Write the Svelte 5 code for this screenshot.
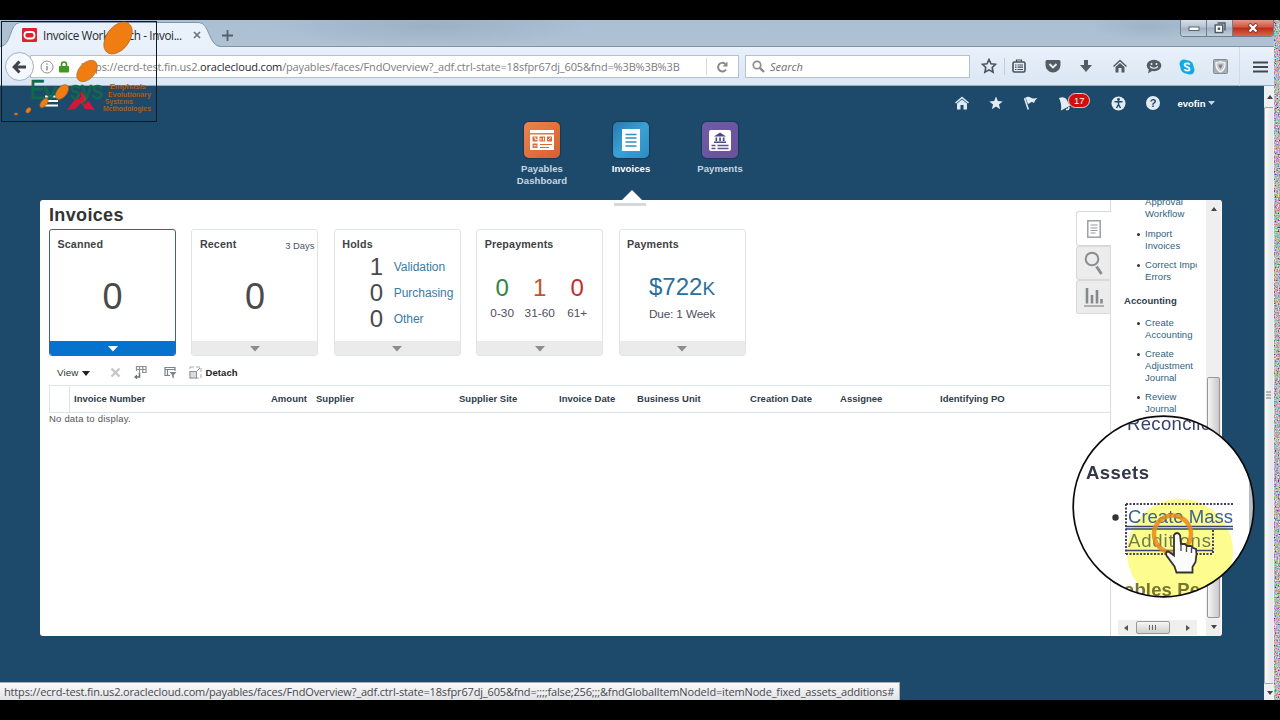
<script lang="ts">
  type Tile = { label: string; icon: string; active?: boolean };

  const tiles: Tile[] = [
    { label: "Payables Dashboard", icon: "dashboard" },
    { label: "Invoices", icon: "invoices", active: true },
    { label: "Payments", icon: "bank" },
  ];

  const holds = [
    { count: 1, label: "Validation" },
    { count: 0, label: "Purchasing" },
    { count: 0, label: "Other" },
  ];

  const aging = [
    { count: 0, label: "0-30", tone: "green" },
    { count: 1, label: "31-60", tone: "orange" },
    { count: 0, label: "61+", tone: "red" },
  ];

  const columns = [
    "Invoice Number", "Amount", "Supplier", "Supplier Site", "Invoice Date",
    "Business Unit", "Creation Date", "Assignee", "Identifying PO",
  ];

  const invoiceTasks = [["Approval", "Workflow"], ["Import", "Invoices"], ["Correct Import", "Errors"]];
  const accountingTasks = [["Create", "Accounting"], ["Create", "Adjustment", "Journal"], ["Review", "Journal"]];

  let selected = $state("Scanned");
</script>

{#snippet card(name: string, body: any, note = "")}
  <button class="card" class:selected={selected === name} onclick={() => (selected = name)}>
    <span class="card-head"><b>{name}</b><small>{note}</small></span>
    <span class="card-body">{@render body()}</span>
    <span class="card-foot"><svg width="10" height="6" viewBox="0 0 10 6"><path d="M0 0h10L5 5.5z" fill="currentColor" /></svg></span>
  </button>
{/snippet}

{#snippet zero()}<span class="big">0</span>{/snippet}

{#snippet holdRows()}
  <span class="holds">
    {#each holds as h}
      <span class="hold"><i>{h.count}</i><em>{h.label}</em></span>
    {/each}
  </span>
{/snippet}

{#snippet agingCols()}
  <span class="aging">
    {#each aging as a}
      <span class="age"><i class={a.tone}>{a.count}</i><em>{a.label}</em></span>
    {/each}
  </span>
{/snippet}

{#snippet due()}
  <span class="due"><i>$722<small>K</small></i><em>Due: 1 Week</em></span>
{/snippet}

{#snippet taskList(items: string[][])}
  <ul>
    {#each items as lines}
      <li>{#each lines as line}<span>{line}</span>{/each}</li>
    {/each}
  </ul>
{/snippet}

<div class="screen">
  <div class="titlebar">
    <div class="tab">
      <svg class="tab-shape" width="222" height="27" viewBox="0 0 222 27">
        <path d="M0 27C12 26 9 3 20 2.500H199C210 3 208 26 221 27z" fill="#e9f1fa" />
        <path d="M0 26.500C12 26 9 3 20 2.500H199C210 3 208 26 221 26.500" fill="none" stroke="#8296aa" />
      </svg>
      <svg class="favicon" width="15" height="14" viewBox="0 0 15 14"><rect width="15" height="14" rx="1" fill="#dc2230" /><rect x="2.500" y="4" width="10" height="6.500" rx="3" fill="none" stroke="#fff" stroke-width="1.800" /></svg>
      <span class="tab-title">Invoice Workbench - Invoi...</span>
      <svg class="tab-close" width="8" height="8" viewBox="0 0 8 8"><path d="M1 1l6 6M7 1l-6 6" stroke="#6b7480" stroke-width="1.700" /></svg>
    </div>
    <svg class="plus" width="11" height="11" viewBox="0 0 11 11"><path d="M5.500 0v11M0 5.500h11" stroke="#55606c" stroke-width="1.800" /></svg>
    <div class="win">
      <span class="min"><svg width="12" height="8" viewBox="0 0 12 8"><rect x="1" y="3" width="10" height="3.500" fill="#fff" stroke="#5a6470" /></svg></span>
      <span class="max"><svg width="12" height="12" viewBox="0 0 12 12"><path d="M3.500 1h7.500v7.500" fill="none" stroke="#4c5866" stroke-width="1.400" /><rect x="1.200" y="3" width="7.500" height="7.500" fill="#fff" stroke="#4c5866" stroke-width="1.400" /><rect x="3.700" y="5.500" width="2.500" height="2.500" fill="#4c5866" /></svg></span>
      <span class="close"><svg width="12" height="10" viewBox="0 0 12 10"><path d="M2 1l8 8M10 1l-8 8" stroke="#8d2b22" stroke-width="4" /><path d="M2.500 1.500l7 7M9.500 1.500l-7 7" stroke="#fff" stroke-width="2.400" /></svg></span>
    </div>
  </div>

  <div class="toolbar">
    <div class="back"><svg width="15" height="14" viewBox="0 0 15 14"><path d="M7.500 1.500L2.200 7l5.300 5.500M2.500 7H14" fill="none" stroke="#3f4347" stroke-width="3" /></svg></div>
    <div class="url">
      <svg width="14" height="14" viewBox="0 0 14 14"><circle cx="7" cy="7" r="6" fill="none" stroke="#909090" /><path d="M7 6v4.500M7 3.500v1.300" stroke="#777" stroke-width="1.200" /></svg>
      <svg class="lock" width="10" height="12" viewBox="0 0 10 12"><path d="M2.500 6V3.500a2.500 2.500 0 015 0V6" fill="none" stroke="#3d8f22" stroke-width="1.600" /><rect y="5" width="10" height="6.500" rx="1" fill="#3d9a1e" /></svg>
      <span class="url-text">https://ecrd-test.fin.us2.<b>oraclecloud.com</b>/payables/faces/FndOverview?_adf.ctrl-state=18sfpr67dj_605&amp;fnd=%3B%3B%3B</span>
      <span class="reload"><svg width="13" height="12" viewBox="0 0 13 12"><path d="M10 8.500A4.300 4.300 0 119.300 3" fill="none" stroke="#8a8a8a" stroke-width="2" /><path d="M11.500 .5v5h-5z" fill="#8a8a8a" /></svg></span>
    </div>
    <div class="search">
      <svg width="13" height="13" viewBox="0 0 13 13"><circle cx="5" cy="5" r="3.700" fill="none" stroke="#8c8c8c" stroke-width="1.700" /><path d="M7.800 7.800l4.200 4.200" stroke="#8c8c8c" stroke-width="2.400" /></svg>
      <span>Search</span>
    </div>
    <div class="tb-star"><svg width="16" height="16" viewBox="0 0 16 16"><path d="M8 1.500l2 4.300 4.600.5-3.400 3.200.9 4.700L8 11.900l-4.100 2.300.9-4.700L1.400 6.300 6 5.800z" fill="none" stroke="#4b5058" stroke-width="1.600" /></svg></div>
    <div class="tb-icons">
      <span><svg width="14" height="14" viewBox="0 0 14 14"><rect x="1" y="3" width="12" height="10" rx="1.500" fill="none" stroke="#4b5058" stroke-width="1.600" /><path d="M4.500 3V1h5v2M3 6h1.500M3 8.200h1.500M3 10.500h1.500M5.500 6H11M5.500 8.200H11M5.500 10.500H11" fill="none" stroke="#4b5058" stroke-width="1.200" /></svg></span>
      <span><svg width="16" height="14" viewBox="0 0 16 14"><path d="M2 1h12a1.500 1.500 0 011.500 1.500V6a7.500 7.500 0 01-15 0V2.500A1.500 1.500 0 012 1z" fill="#565b63" /><path d="M4.500 5L8 8.500 11.500 5" fill="none" stroke="#e6eef7" stroke-width="1.900" /></svg></span>
      <span><svg width="14" height="14" viewBox="0 0 14 14"><path d="M5 1h4v5h4L7 13 1 6h4z" fill="#565b63" /></svg></span>
      <span><svg width="14" height="14" viewBox="0 0 14 14"><path d="M7 .5L14 7l-1 1-6-5.500L1 8 0 7z" fill="#565b63" /><path d="M2.500 8L7 4l4.500 4v5.500h-3V9h-3v4.500h-3z" fill="#565b63" /></svg></span>
      <span><svg width="16" height="15" viewBox="0 0 16 15"><ellipse cx="8" cy="6.500" rx="7.300" ry="5.800" fill="#565b63" /><path d="M3 10L2 14.500 7.500 11z" fill="#565b63" /><circle cx="5.500" cy="5" r="1" fill="#e6eef7" /><circle cx="10.500" cy="5" r="1" fill="#e6eef7" /><path d="M4 7.500q4 3.500 8 0" fill="none" stroke="#e6eef7" stroke-width="1.200" /></svg></span>
      <span><svg width="16" height="16" viewBox="0 0 16 16"><circle cx="5" cy="5" r="4.500" fill="#10abe5" /><circle cx="11" cy="11" r="4.500" fill="#10abe5" /><circle cx="8" cy="8" r="6.700" fill="#10abe5" /><path d="M10.700 5.500C9.500 4 5.500 4 5.500 6S10.700 7.800 10.700 10 6.500 12 5.200 10.300" fill="none" stroke="#fff" stroke-width="1.700" /></svg></span>
      <span><svg width="15" height="15" viewBox="0 0 15 15"><rect x=".5" y=".5" width="14" height="14" rx="1" fill="#a9aeb4" stroke="#858b92" /><path d="M3 3.500Q6 3.500 7.500 2.500 9 3.500 12 3.500q.5 7-4.500 9.500Q2.500 10.500 3 3.500z" fill="#c9cdd1" stroke="#f6f8fa" stroke-width="1.200" /><path d="M5.500 5.500h4q0 3-2 4.500-2-1.500-2-4.500" fill="#7f858c" /></svg></span>
    </div>
    <div class="burger"><svg width="15" height="12" viewBox="0 0 15 12"><path d="M0 1.500h15M0 6h15M0 10.500h15" stroke="#44484e" stroke-width="2.200" /></svg></div>
  </div>

  <div class="viewport">
    <div class="page">
      <div class="global">
        <svg class="menu" width="13" height="12" viewBox="0 0 13 12"><path d="M0 1.500h13M0 6h13M0 10.500h13" stroke="#fff" stroke-width="2" /></svg>
        <div class="global-icons">
          <span><svg width="14" height="14" viewBox="0 0 14 14"><path d="M7 .5L14 6.500l-1 1-6-5-6 5-1-1z" fill="#dfe9f1" /><path d="M2 7.500L7 3.500l5 4v6H8.500V9h-3v4.500H2z" fill="#dfe9f1" /></svg></span>
          <span><svg width="14" height="14" viewBox="0 0 14 14"><path d="M7 .5l1.800 4.600 4.900.3-3.800 3.100 1.300 4.800L7 10.600l-4.200 2.700 1.300-4.800L.3 5.400l4.900-.3z" fill="#e4ecf3" /></svg></span>
          <span><svg width="14" height="14" viewBox="0 0 14 14"><path d="M.5 2l3.800 11.500" stroke="#e4ecf3" stroke-width="1.600" /><path d="M1.500 1.500q3-1.500 5 0t7 .5q-3 2-3.500 5-2-1.500-3.500-.5T4 8z" fill="#e4ecf3" /></svg></span>
          <span class="bell">
            <svg width="14" height="15" viewBox="0 0 14 15"><path d="M1 2Q7 0 9 4q1 4 3.500 5.500L3 14.500Q4 8 1 2z" fill="#e4ecf3" /><path d="M8 13.500q3 .5 3-2.500" stroke="#e4ecf3" stroke-width="1.600" fill="none" /></svg>
            <b class="badge">17</b>
          </span>
          <span><svg width="15" height="15" viewBox="0 0 15 15"><circle cx="7.500" cy="7.500" r="7" fill="#e4ecf3" /><circle cx="7.500" cy="3.500" r="1.400" fill="#1d4a6b" /><path d="M3.500 5.800h8M7.500 6v3.500M7.500 8.500L5.500 12M7.500 8.500l2 3.500" stroke="#1d4a6b" stroke-width="1.500" /></svg></span>
          <span class="help">?</span>
          <span class="user">evofin <svg width="7" height="4" viewBox="0 0 7 4"><path d="M0 0h7L3.500 4z" fill="#c6d6e2" /></svg></span>
        </div>
      </div>

      <div class="tiles">
        {#each tiles as t}
          <div class="tile" class:active={t.active}>
            <div class="tile-icon {t.icon}">
              {#if t.icon === "dashboard"}
                <svg width="26" height="22" viewBox="0 0 26 22"><path d="M1 1h24v3H1z" fill="#fff" /><path d="M1 5.500h24V21H1z" fill="#fff" /><path d="M3.500 7.500h5v5h-5zM10.500 7.500h5.500v5h-5.500zM18 7.500h5v5h-5zM3.500 14.500h5v4.500h-5z" fill="#de6938" /><path d="M6 8v2.300h2.300M12 11.500V9M14.500 11.500V8.500M19 11l3-2.500M4.500 16.800h3" stroke="#fff" fill="none" /><path d="M11 15.500h12M11 18.500h9" stroke="#de6938" stroke-width="1.200" /></svg>
              {:else if t.icon === "invoices"}
                <svg width="20" height="24" viewBox="0 0 20 24"><path d="M1 1h18v22H1z" fill="#fff" /><path d="M4.500 6.500h11M4.500 10h11M4.500 14h11M4.500 18h11" stroke="#2f8fbf" stroke-width="1.300" /></svg>
              {:else}
                <svg width="24" height="23" viewBox="0 0 24 23"><rect x="1" y="1" width="22" height="21" rx="2" fill="#fff" /><path d="M6 7.500L12 3.500l6 4zM7.500 8.500h1.700v3.500H7.500zM11.200 8.500h1.700v3.500h-1.700zM14.800 8.500h1.700v3.500h-1.700zM6 12.500h12V14H6z" fill="#4c4684" /><path d="M3.500 16.500h4M9.500 16.500h11M3.500 19.500h4M9.500 19.500h11" stroke="#5c5391" stroke-width="1.400" /></svg>
              {/if}
            </div>
            <span>{t.label}</span>
            {#if t.active}<i class="pointer"></i>{/if}
          </div>
        {/each}
      </div>

      <div class="panel">
        <div class="main">
          <h1>Invoices</h1>
          <div class="cards">
            {@render card("Scanned", zero)}
            {@render card("Recent", zero, "3 Days")}
            {@render card("Holds", holdRows)}
            {@render card("Prepayments", agingCols)}
            {@render card("Payments", due)}
          </div>
          <div class="actions">
            <span class="view">View <svg width="8" height="5" viewBox="0 0 8 5"><path d="M0 0h8L4 5z" fill="#222" /></svg></span>
            <svg class="del" width="11" height="11" viewBox="0 0 11 11"><path d="M1.500 1.500l8 8M9.500 1.500l-8 8" stroke="#c4c8cb" stroke-width="2.400" /></svg>
            <svg class="wrap" width="13" height="14" viewBox="0 0 13 14"><path d="M2.500 1.500H12v6H8M2.500 1v5M2.500 4.500H12M5.500 1.500v6M8.800 1.500v6" fill="none" stroke="#8c9196" stroke-width="1.200" /><path d="M5.500 7.500v4.500H2" fill="none" stroke="#6f7479" stroke-width="1.600" /><path d="M3 9.500v5L0 12z" fill="#6f7479" /></svg>
            <svg class="filter" width="13" height="13" viewBox="0 0 13 13"><path d="M6 9.500H1v-8h10V5M1 3.500h10M3.500 3.500v6" fill="none" stroke="#7e8388" stroke-width="1.200" /><path d="M5.500 6h7L9.800 9v3.500L8.200 11.300V9z" fill="#7e8388" /></svg>
            <svg class="detach-icon" width="13" height="13" viewBox="0 0 13 13"><rect x="1" y="1" width="11" height="11" fill="none" stroke="#a7abaf" stroke-dasharray="4 2" /><rect x="1" y="5.500" width="6.500" height="6.500" fill="#d9dcde" stroke="#8d9296" /><path d="M8 5l3-3" stroke="#8d9296" /></svg>
            <b>Detach</b>
          </div>
          <div class="thead">
            <span></span>
            {#each columns as c}<b class:num={c === "Amount"}>{c}</b>{/each}
          </div>
          <p class="empty">No data to display.</p>
        </div>

        <div class="rail">
          <span class="on"><svg width="14" height="18" viewBox="0 0 14 18"><rect x=".8" y=".8" width="12.400" height="16.400" fill="none" stroke="#96999c" stroke-width="1.400" /><path d="M3.500 5h7M3.500 8h7M3.500 10.500h7M3.500 13h5" stroke="#96999c" stroke-width="1.100" /></svg></span>
          <span><svg width="19" height="24" viewBox="0 0 19 24"><circle cx="8" cy="8" r="6.300" fill="none" stroke="#8b8e91" stroke-width="2" /><path d="M12.500 15.500l5 7.500" stroke="#8b8e91" stroke-width="3" /></svg></span>
          <span><svg width="20" height="20" viewBox="0 0 20 20"><path d="M0 19h20" stroke="#85898c" stroke-width="1.200" /><path d="M3 1v15.500M8 8v8.500M13 3v13.500M17.500 12v4.500" stroke="#85898c" stroke-width="2.600" /></svg></span>
        </div>

        <div class="side">
          <div class="tasks">
            {@render taskList(invoiceTasks)}
            <h2>Accounting</h2>
            {@render taskList(accountingTasks)}
          </div>
          <div class="hscroll">
            <svg width="4" height="6" viewBox="0 0 4 6"><path d="M4 0v6L0 3z" fill="#555" /></svg>
            <i></i>
            <svg width="4" height="6" viewBox="0 0 4 6"><path d="M0 0v6l4-3z" fill="#555" /></svg>
          </div>
        </div>

        <div class="vscroll">
          <svg width="6" height="4" viewBox="0 0 6 4"><path d="M0 4h6L3 0z" fill="#444" /></svg>
          <i></i>
          <svg width="6" height="4" viewBox="0 0 6 4"><path d="M0 0h6L3 4z" fill="#444" /></svg>
        </div>
      </div>
    </div>

    <div class="page-scroll">
      <svg width="6" height="4" viewBox="0 0 6 4"><path d="M0 4h6L3 0z" fill="#444" /></svg>
      <i><svg width="6" height="8" viewBox="0 0 6 8"><path d="M1 1h5M1 4h5M1 7h5" stroke="#777" /></svg></i>
      <svg width="6" height="4" viewBox="0 0 6 4"><path d="M0 0h6L3 4z" fill="#444" /></svg>
    </div>
  </div>

  <div class="status">https://ecrd-test.fin.us2.oraclecloud.com/payables/faces/FndOverview?_adf.ctrl-state=18sfpr67dj_605&amp;fnd=;;;;false;256;;;&amp;fndGlobalItemNodeId=itemNode_fixed_assets_additions#</div>

  <!-- capture noise along the right edge -->
  <svg class="noise" width="6" height="680">
    <filter id="grain" x="0" y="0" width="100%" height="100%">
      <feTurbulence type="fractalNoise" baseFrequency="0.7" numOctaves="2" seed="7" />
      <feColorMatrix values="1.700 0 0 0 -.38  0 1.700 0 0 -.38  0 0 1.700 0 -.36  0 0 0 0 1" />
    </filter>
    <rect width="6" height="680" filter="url(#grain)" />
  </svg>

  <svg class="logo" width="160" height="104" viewBox="0 0 160 104">
    <rect x="1.500" y="1.500" width="155" height="100" fill="none" stroke="#0c1a26" />
    <path d="M67 90L81 71l14 19-10-1-4-6-6 6z" fill="#d3173a" />
    <text x="30" y="79" class="evo" font-size="28" textLength="15" lengthAdjust="spacingAndGlyphs">E</text>
    <text x="44" y="79" class="evo" font-size="22" textLength="13" lengthAdjust="spacingAndGlyphs">v</text>
    <text x="70" y="79" class="evo" font-size="25" textLength="33" lengthAdjust="spacingAndGlyphs">sys</text>
    <g class="blob">
      <ellipse cx="118" cy="18" rx="18" ry="11.500" transform="rotate(-53 118 18)" />
      <ellipse cx="87" cy="51" rx="12.500" ry="8" transform="rotate(-48 87 51)" />
      <ellipse cx="62" cy="72" rx="8.500" ry="5" transform="rotate(-52 62 72)" />
      <ellipse cx="44" cy="83" rx="5.500" ry="3" transform="rotate(-52 44 83)" />
      <ellipse cx="28" cy="90.500" rx="3" ry="2" transform="rotate(-52 28 90)" />
      <ellipse cx="16" cy="94" rx="2" ry="1" />
    </g>
    <g class="tagline">
      <text x="110" y="69" textLength="36" lengthAdjust="spacingAndGlyphs">Emphasis</text>
      <text x="108" y="76.500" textLength="43" lengthAdjust="spacingAndGlyphs">Evolutionary</text>
      <text x="105" y="84" textLength="28" lengthAdjust="spacingAndGlyphs">Systems</text>
      <text x="103" y="91" textLength="48" lengthAdjust="spacingAndGlyphs">Methodologies</text>
    </g>
  </svg>

  <svg class="lens" width="184" height="184" viewBox="1071 414 184 184">
    <defs><clipPath id="lens-clip"><circle cx="1163.500" cy="506.500" r="90" /></clipPath></defs>
    <circle cx="1163.500" cy="506.500" r="90" fill="#fff" />
    <g clip-path="url(#lens-clip)">
      <path d="M1249 440h8v130h-8z" fill="#b9bdc4" />
      <circle cx="1180" cy="552" r="53" fill="#fdfc8e" />
      <g class="magnified">
        <text x="1127" y="430" textLength="84" fill="#39426b">Reconcile</text>
        <text x="1086" y="479" textLength="63" font-weight="bold" fill="#34374a">Assets</text>
        <circle cx="1115.500" cy="517.500" r="3.200" fill="#333" />
        <text x="1128" y="523" textLength="105" fill="#3d618e">Create Mass</text>
        <text x="1128" y="547" textLength="83" fill="#6d7c48">Additions</text>
        <text x="1124" y="596" textLength="76" font-weight="bold" fill="#77752f">ables Pe</text>
      </g>
      <path d="M1126 526.500h107M1126 529h107M1126 550.500h87" stroke="#34466f" stroke-width="1.500" />
      <path d="M1126 504h107M1126 504v50M1213 530v23M1126 554h87" stroke="#404060" stroke-width="2" stroke-dasharray="2 1.500" fill="none" />
    </g>
    <circle cx="1172.500" cy="534" r="18.500" fill="none" stroke="#e88a1c" stroke-opacity=".85" stroke-width="4.500" />
    <path d="M1174 535q3-4 6 0l1 9 4 0 2 2 4 0 2 2 3 1 .5 5-1 8-3 5v5.500h-16l-2-6-8-11q-1.500-4 2-4l5.500 4z" fill="#fbfbfb" stroke="#333" stroke-width="1.800" />
    <path d="M1181 544v7M1186.500 546v6M1191.500 548v5" stroke="#444" stroke-width="1.300" />
    <circle cx="1163.500" cy="506.500" r="90.300" fill="none" stroke="#0a0a0a" stroke-width="1.700" />
  </svg>
</div>

<style>
  :global(body) { background: #000; }
  .screen {
    position: relative; width: 1280px; height: 720px; padding: 20px 0; box-sizing: border-box; overflow: hidden;
    display: flex; flex-direction: column; background: #000;
    font-family: "Liberation Sans", Arial, sans-serif; color: #333;
  }
  svg { display: block; flex-shrink: 0; }
  i, em { font-style: normal; }

  /* Title bar */
  .titlebar {
    height: 27px; display: flex; align-items: center;
    background:
      radial-gradient(ellipse 160px 22px at 430px 6px, rgba(130,148,166,.35), transparent),
      radial-gradient(ellipse 60px 14px at 1150px 6px, rgba(130,148,166,.3), transparent),
      linear-gradient(#a9bfd4, #b0c2d3);
    box-shadow: inset 0 -1px #7f93a7;
  }
  .tab { position: relative; width: 221px; height: 27px; display: flex; align-items: center; }
  .tab-shape { position: absolute; left: 0; top: 0; }
  .favicon, .tab-title, .tab-close { position: relative; }
  .favicon { margin-left: 22px; margin-top: 3px; }
  .tab-title { margin: 2px 0 0 6px; width: 139px; font: 11.7px "Open Sans", "Noto Sans", sans-serif; letter-spacing: -.37px; color: #252a30; white-space: nowrap; }
  .tab-close { margin: 3px 0 0 11px; }
  .plus { margin: 3px 0 0 1px; }
  .win { margin-left: auto; margin-right: 6px; align-self: flex-start; height: 16px; display: flex; border: 1px solid #6f7d8c; border-top: 0; border-radius: 0 0 4px 4px; overflow: hidden; }
  .win span { display: flex; align-items: center; justify-content: center; }
  .min, .max { width: 25px; background: linear-gradient(#d5dee8, #b4c2d0 45%, #9fb0c2 50%, #c1cfdd); border-right: 1px solid #6f7d8c; }
  .close { width: 40px; background: linear-gradient(#e49a87, #cf5540 45%, #b92c18 50%, #d8684a); }

  /* Browser toolbar */
  .toolbar { height: 39px; display: flex; align-items: center; background: linear-gradient(#e9f1fa, #d9e6f4); box-shadow: inset 0 -1px #9bacbc; }
  .back { z-index: 1; width: 29px; height: 29px; margin-left: 5px; margin-right: -10px; box-sizing: border-box; border: 1px solid #9fb0c2; border-radius: 50%; background: #f5f9fd; display: flex; align-items: center; justify-content: center; }
  .url { margin-left: 6px; width: 709px; height: 23px; box-sizing: border-box; background: #fff; border: 1px solid #b4c0cc; display: flex; align-items: center; padding-left: 9px; }
  .lock { margin-left: 5px; }
  .url-text { margin-left: 12px; font: 11px "Open Sans", "Noto Sans", sans-serif; letter-spacing: -.16px; color: #7c7c7c; white-space: nowrap; }
  .url-text b { font-weight: normal; color: #1f1f2b; }
  .reload { margin-left: auto; width: 31px; height: 17px; display: flex; align-items: center; justify-content: center; border-left: 1px solid #d5d9dd; }
  .search { margin-left: 6px; width: 225px; height: 23px; box-sizing: border-box; border: 1px solid #b4c0cc; background: #fff; display: flex; align-items: center; gap: 5px; padding-left: 6px; font: italic 11px "Open Sans", "Noto Sans", sans-serif; color: #6d6d6d; }
  .tb-star { width: 35px; height: 17px; padding: 0 7px 0 11px; box-sizing: border-box; border-right: 1px solid #c3ced9; }
  .tb-icons { display: flex; margin-left: -3px; }
  .tb-icons span { width: 33.7px; display: flex; justify-content: center; }
  .burger { height: 39px; margin-left: 1px; padding-left: 13px; border-left: 1px solid #cfdbe7; display: flex; align-items: center; }

  /* Page */
  .viewport { flex: 1; display: flex; }
  .page { width: 1264px; height: 614px; background: #1d4a6b; }
  .global { height: 34px; display: flex; align-items: center; justify-content: space-between; padding: 0 48px 0 45px; }
  .menu { margin-top: -4px; }
  .global-icons { display: flex; align-items: center; }
  .global-icons > span { width: 34.7px; display: flex; justify-content: center; }
  .global-icons > .bell { position: relative; width: 53px; justify-content: flex-start; padding-left: 10px; box-sizing: border-box; }
  .badge { position: absolute; left: 20px; top: -3px; width: 20px; height: 13px; border: 1px solid #f3c8c8; border-radius: 8px; background: #d20d0d; color: #fff; font-size: 9.5px; font-weight: normal; line-height: 13px; text-align: center; }
  .global-icons > .help { width: 14px; height: 14px; margin: 0 17px 0 10px; border-radius: 50%; background: #e4ecf3; color: #1d4a6b; font: bold 11px/14px "Liberation Sans", sans-serif; }
  .global-icons > .user { width: 39px; align-items: center; gap: 3px; font-size: 9.5px; font-weight: bold; color: #fff; }

  .tiles { height: 80px; display: flex; justify-content: center; padding: 2px 2px 0 0; box-sizing: border-box; gap: 9px; }
  .tile { position: relative; width: 80px; text-align: center; font-size: 9.5px; font-weight: bold; line-height: 12px; color: #c7d8e4; letter-spacing: .08px; }
  .tile.active { color: #fff; }
  .tile span { display: block; width: 60px; margin: 5px auto 0; }
  .tile-icon { width: 36px; height: 36px; margin: 0 auto; border-radius: 5px; display: flex; align-items: center; justify-content: center; box-shadow: 0 0 1px 1px rgba(10,30,50,.35); }
  .tile-icon.dashboard { background: linear-gradient(135deg, #ec8450, #d65f2c); }
  .tile-icon.invoices { background: linear-gradient(135deg, #2679ad, #3aa0d5 50%, #2d8cc0); }
  .tile-icon.bank { background: linear-gradient(135deg, #6f5ba5, #6a519c); }
  .pointer { position: absolute; left: 31px; bottom: 0; border: 10px solid transparent; border-top: 0; border-bottom: 10px solid #fff; }

  .panel { position: relative; width: 1182px; height: 436px; margin-left: 40px; background: #fff; border-radius: 3px; display: flex; overflow: hidden; }
  .panel::before { content: ""; position: absolute; left: 574px; top: 3px; width: 32px; height: 3px; background: #d6d9dc; }
  .main { width: 1036px; padding-left: 9px; box-sizing: border-box; }
  h1 { margin: 0; height: 29px; font-size: 18px; line-height: 30px; letter-spacing: .35px; color: #333; }
  .cards { display: flex; gap: 15.4px; }
  .card { width: 127px; height: 127px; padding: 0; box-sizing: border-box; border: 1px solid #dfe4e8; border-radius: 3px; background: #fff; display: flex; flex-direction: column; font-family: inherit; color: #4a4a4a; overflow: hidden; flex-shrink: 0; }
  .card-head { display: flex; justify-content: space-between; align-items: baseline; width: 100%; box-sizing: border-box; padding: 8px 3px 0 7.5px; height: 23px; font-size: 10.7px; letter-spacing: .15px; color: #3f4245; }
  .card-head small { font-size: 9.4px; letter-spacing: 0; color: #4b5563; position: relative; top: 1px; }
  .card-body { flex: 1; width: 100%; display: flex; align-items: center; justify-content: center; }
  .card-foot { width: 100%; height: 14px; padding-top: 1px; box-sizing: border-box; background: #ebebeb; color: #8c8c8c; display: flex; align-items: center; justify-content: center; }
  .card.selected { border-color: #3c5da8; }
  .selected .card-foot { background: #0572ce; color: #fff; }
  .big { font-size: 36px; line-height: 36px; }
  .holds { width: 100%; padding-left: 35px; margin-top: -9px; }
  .hold { display: flex; align-items: center; height: 26px; }
  .hold i { width: 24px; font-size: 24px; line-height: 26px; text-align: left; }
  .hold em { font-size: 12px; color: #3a7ca3; letter-spacing: -.05px; }
  .aging { display: flex; margin-top: 3px; }
  .age, .due { display: flex; flex-direction: column; align-items: center; }
  .age { width: 37.500px; }
  .age i, .due i { font-size: 24px; line-height: 28px; }
  .age em, .due em { font-size: 11.8px; line-height: 22px; color: #4e4e60; white-space: nowrap; }
  .green { color: #2e8540; }
  .orange { color: #c8512b; }
  .red { color: #bf2d2a; }
  .due { margin-top: 3px; }
  .due em { letter-spacing: -.15px; }
  .due i { color: #2b6f9b; }
  .due i small { font-size: 19px; }

  .actions { height: 29px; display: flex; align-items: center; padding: 3px 0 0 8px; box-sizing: border-box; font-size: 9.5px; color: #222; letter-spacing: .1px; }
  .view { display: flex; align-items: center; gap: 4px; font-size: 9.8px; color: #2a3a2c; }
  .view svg { margin-top: 2px; }
  .del { margin-left: 20px; }
  .wrap { margin-left: 13px; }
  .filter { margin-left: 17px; }
  .detach-icon { margin-left: 12px; margin-right: 3px; }
  .thead { height: 28px; box-sizing: border-box; border: 1px solid #dbe4ea; border-right: 0; width: 1061px; display: grid; align-items: center; grid-template-columns: 20px 185px 57px 143px 100px 78px 113px 90px 100px 1fr; font-size: 9.5px; letter-spacing: .02px; color: #2f3d4a; }
  .thead span { height: 26px; box-sizing: border-box; border-right: 1px solid #dbe4ea; }
  .thead b { padding: 0 0 1px 4px; white-space: nowrap; }
  .thead b.num { padding: 0 5px 1px 0; text-align: right; }
  .empty { margin: 0; font-size: 9.5px; line-height: 12px; color: #555; letter-spacing: .2px; }

  .rail { width: 34px; padding-top: 11px; border-right: 1px solid #d9dcdf; }
  .rail span { height: 34px; box-sizing: border-box; display: flex; align-items: center; justify-content: center; background: #ececec; border: 1px solid #d9d9d9; border-right: 0; border-radius: 3px 0 0 3px; }
  .rail .on { height: 35px; background: #fff; margin-right: -1px; }

  .side { width: 86px; overflow: hidden; display: flex; flex-direction: column; justify-content: space-between; }
  .tasks { height: 419px; overflow: hidden; font-size: 9.5px; line-height: 12px; letter-spacing: .05px; color: #2d6280; }
  .tasks ul { list-style: none; margin: -4px 0 0; padding: 0 0 0 34px; }
  .tasks li { position: relative; margin-bottom: 7px; }
  .tasks ul:first-child li:first-child { margin-bottom: 8px; }
  .tasks li::before { content: ""; position: absolute; left: -8px; top: 5px; width: 3px; height: 3px; border-radius: 50%; background: #333; }
  .tasks ul:first-child li:first-child::before { display: none; }
  .tasks span { display: block; white-space: nowrap; }
  .tasks h2 { margin: 12px 0 10px 13px; font-size: 9.5px; line-height: 12px; color: #2c3c4c; }
  .tasks h2 + ul { margin-top: 0; }
  .hscroll { width: 79px; height: 15px; margin: 0 0 1px 7px; background: #efefef; display: flex; align-items: center; justify-content: space-between; padding: 0 7px 0 6px; box-sizing: border-box; }
  .hscroll i { width: 34px; height: 13px; margin-right: 9px; box-sizing: border-box; border: 1px solid #9a9a9a; border-radius: 2px; background: linear-gradient(90deg, transparent 38%, #666 38% 41%, transparent 41% 47%, #666 47% 50%, transparent 50% 56%, #666 56% 59%, transparent 59%) center / 100% 5px no-repeat, linear-gradient(#f6f6f6, #cfcfcf); }
  .vscroll { width: 15px; margin-left: 9px; background: #efefef; display: flex; flex-direction: column; align-items: center; padding: 7px 0; box-sizing: border-box; }
  .vscroll i { width: 13px; height: 242px; margin: 166px 0 7px; box-sizing: border-box; border: 1px solid #979797; border-radius: 2px; background: linear-gradient(90deg, #f4f4f4, #c9c9cd); }

  .page-scroll { width: 10px; height: 614px; background: #eef0f2; display: flex; flex-direction: column; align-items: flex-end; padding: 9px 1px 5px 1px; box-sizing: border-box; justify-content: space-between; }
  .page-scroll i { width: 9px; height: 577px; box-sizing: border-box; border: 1px solid #a0a4a8; border-right: 0; border-radius: 2px 0 0 2px; background: linear-gradient(90deg, #fafafa, #e3e5e8); display: flex; align-items: center; }

  .status { position: absolute; left: 0; top: 682px; width: 900px; height: 18px; box-sizing: border-box; padding-left: 4px; background: linear-gradient(#fafafa, #e2e3e5); border: solid #a6adb3; border-width: 1px 1px 0 0; font: 11px/18px "Open Sans", "Noto Sans", sans-serif; letter-spacing: -.16px; color: #47474f; white-space: nowrap; }
  .noise { position: absolute; left: 1274px; top: 20px; }
  .logo { position: absolute; left: 0; top: 20px; z-index: 2; }
  .evo { font-family: "Liberation Sans", sans-serif; fill: #0e6a4a; stroke: #0e6a4a; stroke-width: .6; }
  .blob { fill: #ef7d12; stroke: #a2642b; stroke-width: .6; }
  .tagline { font: bold 6.500px "Liberation Sans", sans-serif; fill: #d0721f; stroke: #2b2a2a; stroke-width: .2; }
  .lens { position: absolute; left: 1071px; top: 414px; z-index: 2; }
  .magnified { font-family: "Liberation Sans", sans-serif; font-size: 18.500px; filter: blur(.5px); }
</style>
